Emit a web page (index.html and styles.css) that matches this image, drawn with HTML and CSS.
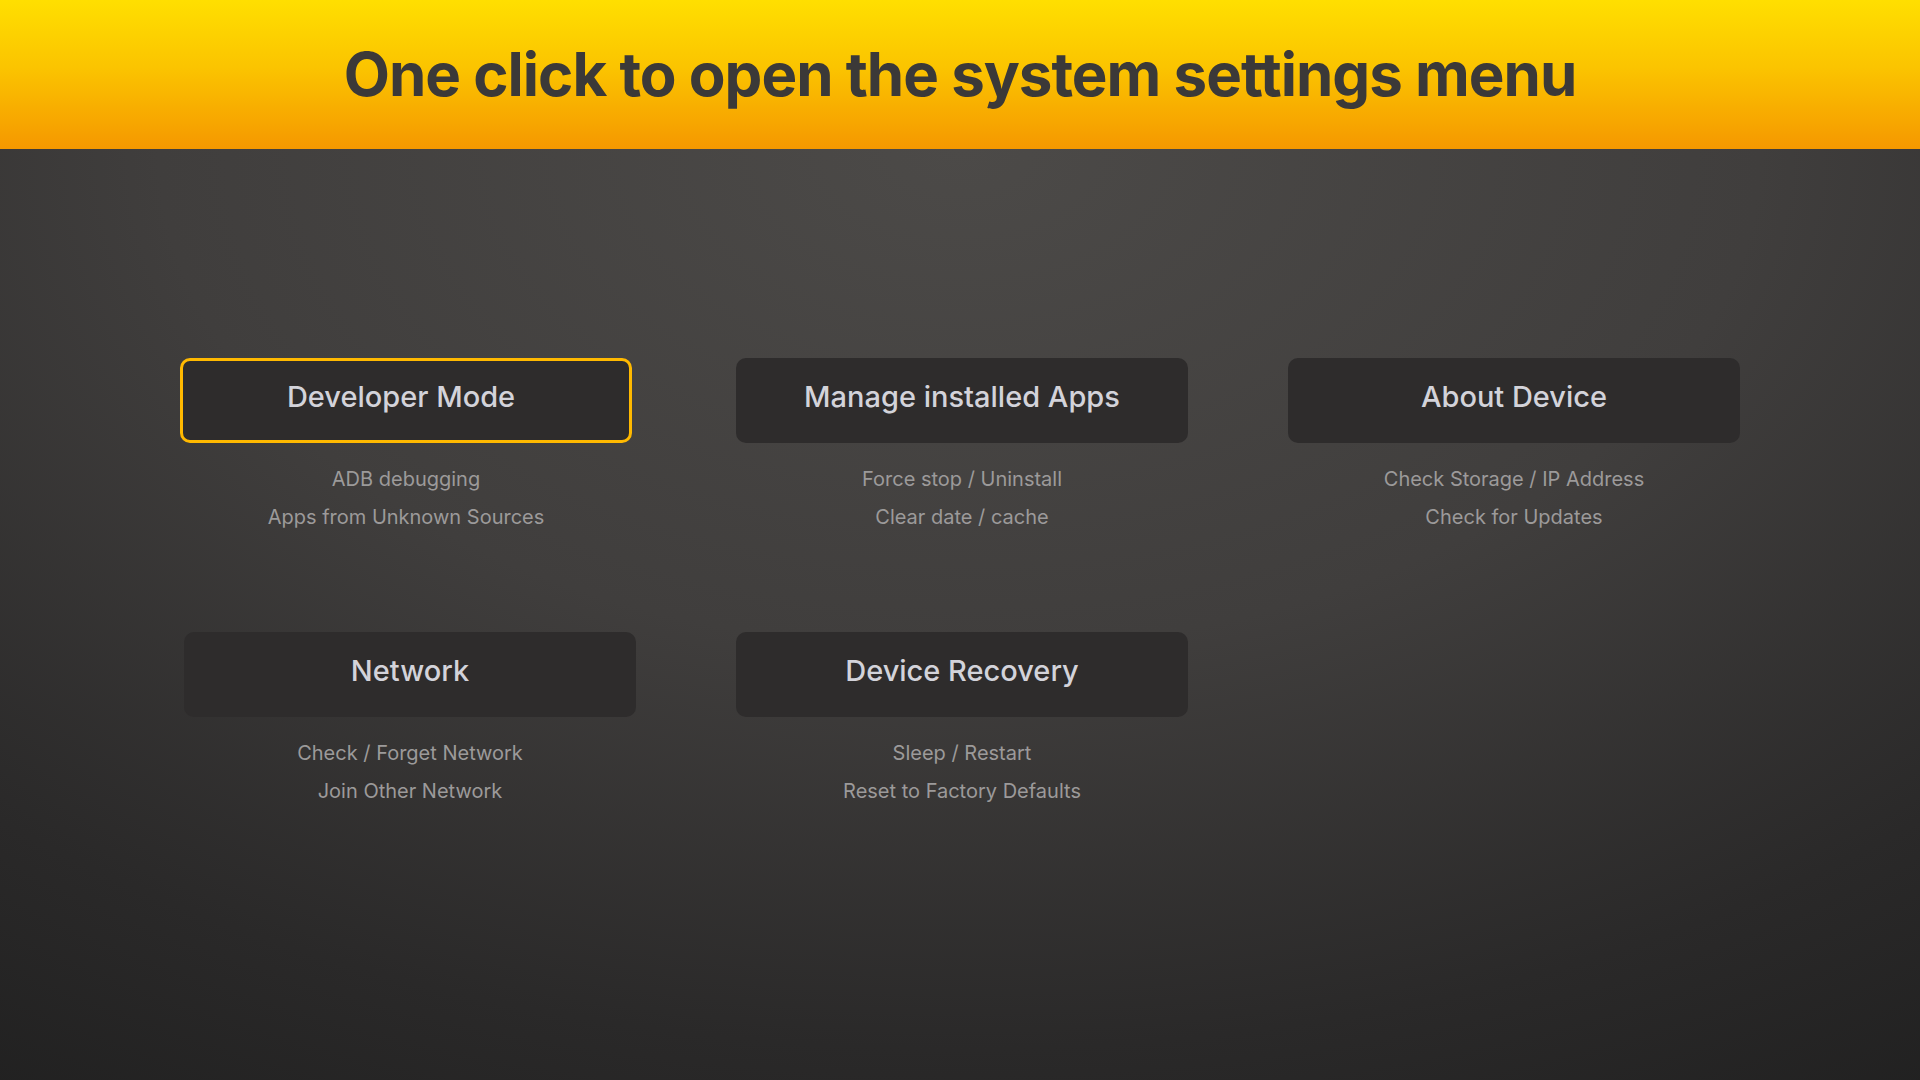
FILE: index.html
```html
<!DOCTYPE html>
<html lang="en">
<head>
<meta charset="utf-8">
<title>System settings</title>
<link rel="stylesheet" href="styles.css">
</head>
<body>
<header class="banner">
  <h1 class="banner-title">One click to open the system settings menu</h1>
</header>
<main class="stage">
  <div class="grid">
    <section class="item item-focused">
      <div class="tile tile-focused">Developer Mode</div>
      <ul class="subs">
        <li>ADB debugging</li>
        <li>Apps from Unknown Sources</li>
      </ul>
    </section>
    <section class="item">
      <div class="tile">Manage installed Apps</div>
      <ul class="subs">
        <li>Force stop / Uninstall</li>
        <li>Clear date / cache</li>
      </ul>
    </section>
    <section class="item">
      <div class="tile">About Device</div>
      <ul class="subs">
        <li>Check Storage / IP Address</li>
        <li>Check for Updates</li>
      </ul>
    </section>
    <section class="item">
      <div class="tile">Network</div>
      <ul class="subs">
        <li>Check / Forget Network</li>
        <li>Join Other Network</li>
      </ul>
    </section>
    <section class="item">
      <div class="tile">Device Recovery</div>
      <ul class="subs">
        <li>Sleep / Restart</li>
        <li>Reset to Factory Defaults</li>
      </ul>
    </section>
  </div>
</main>
</body>
</html>
```

FILE: styles.css
```css
* { box-sizing: border-box; }
html, body {
  margin: 0;
  padding: 0;
  width: 1920px;
  height: 1080px;
  overflow: hidden;
}
body {
  font-family: Inter, "Noto Sans", "Liberation Sans", sans-serif;
  background: radial-gradient(ellipse 2000px 1250px at 960px 149px, #4c4a48 0%, #403e3d 40%, #2a2929 72%, #1c1c1c 100%);
  display: flex;
  flex-direction: column;
}
.banner {
  height: 149px;
  flex: none;
  background: linear-gradient(to bottom, #ffdf00 0%, #fbc400 45%, #f59800 100%);
  display: flex;
  align-items: center;
  justify-content: center;
}
.banner-title {
  margin: 0;
  padding-bottom: 2px;
  font-size: 60px;
  font-weight: 700;
  letter-spacing: -1px;
  color: #3b3938;
}
.stage {
  flex: 1;
  padding-top: 209px;
  padding-left: 184px;
}
.grid {
  display: grid;
  grid-template-columns: repeat(3, 452px);
  column-gap: 100px;
  row-gap: 96px;
}
.item {
  display: flex;
  flex-direction: column;
  align-items: center;
}
.item-focused {
  transform: translateX(-4px);
}
.tile {
  width: 452px;
  height: 85px;
  border-radius: 10px;
  background: #2e2c2c;
  color: #d3d3da;
  font-size: 29px;
  font-weight: 500;
  display: flex;
  align-items: center;
  justify-content: center;
  padding-bottom: 9px;
}
.tile-focused {
  border: 3px solid #ffb900;
  padding-right: 10px;
}
.subs {
  list-style: none;
  margin: 17px 0 0;
  padding: 0;
  text-align: center;
  color: #9c9a9a;
  font-size: 20px;
  line-height: 38px;
}
```
